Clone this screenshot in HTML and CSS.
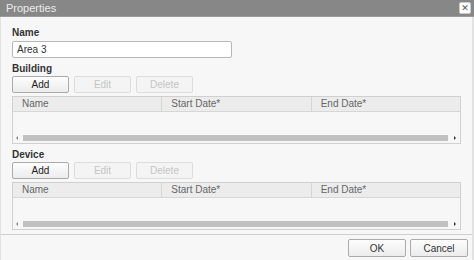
FILE: index.html
```html
<!DOCTYPE html>
<html lang="en">
<head>
  <meta charset="UTF-8" />
  <title>Properties</title>
  <link rel="stylesheet" href="styles.css">
</head>
<body>
  <div class="dialog">
    <div class="titlebar">
      <span class="title">Properties</span>
      <button class="close">&#x2715;</button>
    </div>

    <div class="content">
      <div class="label">Name</div>
      <input class="text-input" type="text" value="Area 3" />

      <div class="label section">Building</div>
      <div class="toolbar">
        <button class="btn">Add</button>
        <button class="btn" disabled>Edit</button>
        <button class="btn" disabled>Delete</button>
      </div>
      <div class="grid">
        <div class="grid-header">
          <div class="col">Name</div>
          <div class="col">Start Date*</div>
          <div class="col">End Date*</div>
        </div>
        <div class="grid-body"></div>
        <div class="hscroll">
          <span class="arrow left"></span>
          <span class="thumb"></span>
          <span class="arrow right"></span>
        </div>
      </div>

      <div class="label section">Device</div>
      <div class="toolbar">
        <button class="btn">Add</button>
        <button class="btn" disabled>Edit</button>
        <button class="btn" disabled>Delete</button>
      </div>
      <div class="grid">
        <div class="grid-header">
          <div class="col">Name</div>
          <div class="col">Start Date*</div>
          <div class="col">End Date*</div>
        </div>
        <div class="grid-body"></div>
        <div class="hscroll">
          <span class="arrow left"></span>
          <span class="thumb"></span>
          <span class="arrow right"></span>
        </div>
      </div>
    </div>

    <div class="footer">
      <button class="btn footer-btn">OK</button>
      <button class="btn footer-btn">Cancel</button>
    </div>
  </div>
</body>
</html>
```

FILE: styles.css
```css
* {
  margin: 0;
  padding: 0;
  box-sizing: border-box;
}

body {
  font-family: "Liberation Sans", Arial, sans-serif;
  font-size: 10px;
  color: #333;
  background: #f7f7f7;
  width: 474px;
  height: 260px;
  overflow: hidden;
}

.dialog {
  width: 474px;
  height: 260px;
  display: flex;
  flex-direction: column;
  background: #f7f7f7;
  border-left: 1px solid #e2e2e2;
  border-right: 2px solid #e2e2e2;
}

.titlebar {
  height: 18px;
  background: #878787;
  border-bottom: 1px solid #9a9a9a;
  display: flex;
  align-items: center;
  justify-content: space-between;
  padding: 0 3px 0 6px;
  margin: 0 -2px 0 -1px;
}

.title {
  color: #ececec;
  font-size: 11px;
}

.close {
  width: 12px;
  height: 12px;
  background: #fff;
  border: 1px solid #ccc;
  border-radius: 2px;
  font-size: 9px;
  font-weight: bold;
  color: #555;
  line-height: 10px;
  text-align: center;
  font-family: "DejaVu Sans", sans-serif;
}

.content {
  flex: 1;
  padding: 10px 11px 0 11px;
  display: flex;
  flex-direction: column;
}

.label {
  font-weight: bold;
  font-size: 10px;
  color: #333;
  line-height: 12px;
}

.label.section {
  margin-top: 5px;
}

.text-input {
  margin-top: 2px;
  width: 220px;
  height: 17px;
  border: 1px solid #b8b8b8;
  border-radius: 2px;
  background: #fff;
  padding: 0 4px;
  font-family: inherit;
  font-size: 10px;
  color: #333;
}

.toolbar {
  display: flex;
  gap: 5px;
  margin-top: 1px;
}

.btn {
  width: 57px;
  height: 17px;
  font-family: inherit;
  font-size: 10px;
  color: #222;
  background: linear-gradient(#fdfdfd, #ececec);
  border: 1px solid #ababab;
  border-radius: 2px;
}

.btn:disabled {
  color: #c4c4c4;
  background: #f4f4f4;
  border-color: #dcdcdc;
}

.grid {
  margin-top: 3px;
  width: 449px;
  height: 48px;
  border: 1px solid #d0d0d0;
  display: flex;
  flex-direction: column;
  background: #f7f7f7;
}

.grid-header {
  display: flex;
  height: 15px;
  background: #ececec;
  border-bottom: 1px solid #d6d6d6;
}

.col {
  flex: 1;
  padding-left: 9px;
  line-height: 14px;
  color: #666;
  border-right: 1px solid #d6d6d6;
}

.col:last-child {
  border-right: none;
}

.grid-body {
  flex: 1;
}

.hscroll {
  height: 8px;
  display: flex;
  align-items: center;
  padding-bottom: 1px;
}

.thumb {
  flex: 1;
  height: 6px;
  background: #c1c1c1;
}

.arrow {
  width: 10px;
  height: 6px;
  position: relative;
}

.arrow::after {
  content: "";
  position: absolute;
  top: 1px;
  border-top: 2px solid transparent;
  border-bottom: 2px solid transparent;
}

.arrow.left::after {
  left: 3px;
  border-right: 2px solid #888;
}

.arrow.right {
  width: 12px;
}

.arrow.right::after {
  left: 6px;
  border-left: 2px solid #333;
}

.footer {
  height: 28px;
  margin-top: 4px;
  border-top: 1px solid #cfcfcf;
  display: flex;
  justify-content: flex-end;
  align-items: center;
  gap: 4px;
  padding-right: 4px;
  padding-top: 2px;
}

.footer-btn {
  width: 58px;
  height: 18px;
  color: #333;
}
```
